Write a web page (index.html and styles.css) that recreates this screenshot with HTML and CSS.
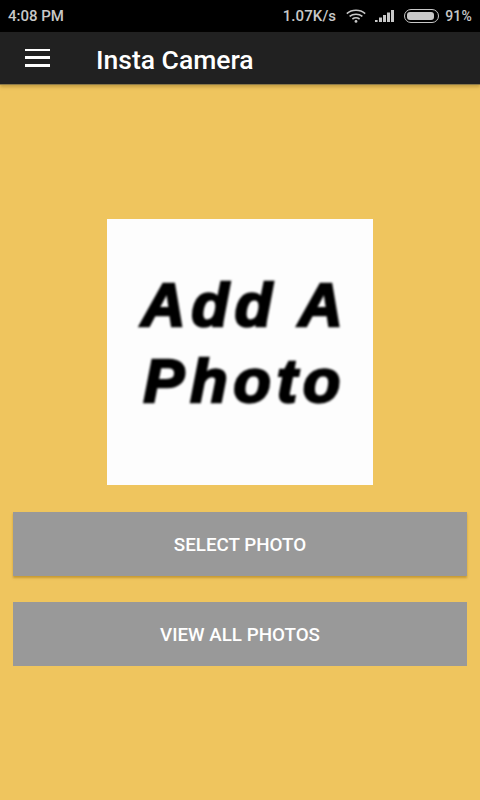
FILE: index.html
```html
<!DOCTYPE html>
<html lang="en">
<head>
    <meta charset="UTF-8">
    <meta name="viewport" content="width=device-width, initial-scale=1.0">
    <title>Insta Camera</title>
    <link rel="stylesheet" href="styles.css">
</head>
<body>
    <div class="status-bar">
        <span class="clock">4:08 PM</span>
        <div class="status-right">
            <span class="speed">1.07K/s</span>
            <svg class="wifi" width="20" height="14" viewBox="0 0 20 14" fill="none" stroke="#c8c8c8" stroke-width="1.6">
                <path d="M.8 4.6C6 .2 14 .2 19.2 4.6"/>
                <path d="M3.6 7.4C7.2 4.5 12.8 4.5 16.4 7.4"/>
                <path d="M6.4 10C8.5 8.6 11.5 8.6 13.6 10"/>
                <circle cx="10" cy="12.4" r="1.4" fill="#c8c8c8" stroke="none"/>
            </svg>
            <svg class="signal" width="20" height="14" viewBox="0 0 20 14" fill="#c8c8c8">
                <rect x="0" y="11" width="2.6" height="2"/>
                <rect x="4" y="8.5" width="3" height="4.5"/>
                <rect x="8" y="6" width="3" height="7"/>
                <rect x="12" y="3.5" width="3" height="9.5"/>
                <rect x="16" y="1" width="3" height="12"/>
            </svg>
            <div class="battery"><div class="battery-level"></div></div>
            <span class="percent">91%</span>
        </div>
    </div>

    <div class="toolbar">
        <button class="menu-button" aria-label="Menu">
            <span></span><span></span><span></span>
        </button>
        <h1>Insta Camera</h1>
    </div>

    <div class="content">
        <div class="photo">
            <div>Add A</div>
            <div>Photo</div>
        </div>
        <button class="action raised">SELECT PHOTO</button>
        <button class="action">VIEW ALL PHOTOS</button>
    </div>
</body>
</html>
```

FILE: styles.css
```css
* {
    box-sizing: border-box;
}

html, body {
    height: 100%;
}

body {
    margin: 0;
    font-family: Roboto, "Liberation Sans", sans-serif;
    background-color: #efc55e;
    display: flex;
    flex-direction: column;
    overflow: hidden;
}

.status-bar {
    height: 32px;
    background-color: #000;
    color: #c8c8c8;
    font-size: 15px;
    font-weight: 500;
    padding: 0 8px;
    display: flex;
    align-items: center;
    justify-content: space-between;
    flex-shrink: 0;
}

.status-right {
    display: flex;
    align-items: center;
}

.speed {
    letter-spacing: 0.1px;
}

.wifi {
    margin-left: 10px;
}

.signal {
    margin-left: 9px;
}

.battery {
    width: 35px;
    height: 14px;
    margin-left: 9px;
    border: 1px solid #c8c8c8;
    border-radius: 7px;
    padding: 2px;
}

.battery-level {
    width: 94%;
    height: 100%;
    background-color: #c8c8c8;
    border-radius: 3px;
}

.percent {
    margin-left: 6px;
    font-size: 14px;
    letter-spacing: 0.2px;
}

.toolbar {
    height: 53px;
    background-color: #212121;
    border-bottom: 1px solid #8d7a48;
    box-shadow: 0 2px 3px rgba(120, 90, 20, 0.35);
    display: flex;
    align-items: center;
    padding-left: 25px;
    flex-shrink: 0;
    position: relative;
}

.menu-button {
    width: 25px;
    height: 18px;
    padding: 0;
    margin-bottom: 1px;
    border: none;
    background: none;
    display: flex;
    flex-direction: column;
    justify-content: space-between;
}

.menu-button span {
    display: block;
    height: 2.5px;
    background-color: #fff;
}

.toolbar h1 {
    margin: 3px 0 0 46px;
    color: #fff;
    font-size: 26.5px;
    font-weight: 500;
}

.content {
    padding: 134px 13px 0;
    display: flex;
    flex-direction: column;
    align-items: center;
}

.photo {
    width: 266px;
    height: 266px;
    background-color: #fdfdfd;
    color: #000;
    font-family: "Liberation Sans", Arial, sans-serif;
    font-size: 61px;
    font-weight: 700;
    font-style: italic;
    line-height: 76px;
    letter-spacing: 6px;
    text-align: center;
    padding: 48px 0 0 10px;
    margin-bottom: 27px;
}

.photo div {
    filter: blur(0.8px);
    -webkit-text-stroke: 2.6px #000;
}

.action {
    width: 100%;
    height: 64px;
    border: none;
    padding: 2px 0 0;
    background-color: #999;
    color: #fff;
    font-family: Roboto, "Liberation Sans", sans-serif;
    font-size: 18.8px;
    font-weight: 500;
    flex-shrink: 0;
}

.action.raised {
    box-shadow: 0 2px 2px rgba(170, 125, 25, 0.6);
    margin-bottom: 26px;
}
```
